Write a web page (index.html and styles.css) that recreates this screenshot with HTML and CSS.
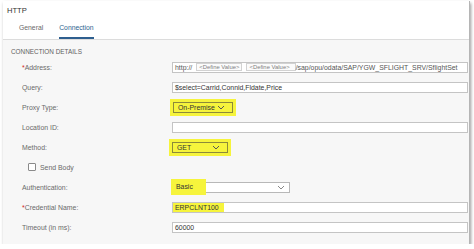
FILE: index.html
```html
<!DOCTYPE html>
<html lang="en">
<head>
<meta charset="utf-8">
<title>HTTP Connection</title>
<link rel="stylesheet" href="styles.css">
</head>
<body>
<div class="card">
  <header class="head">
    <div class="title">HTTP</div>
    <nav class="tabs">
      <span class="tab">General</span>
      <span class="tab active">Connection</span>
    </nav>
  </header>
  <section class="content">
    <h2 class="section-title">CONNECTION DETAILS</h2>
    <div class="form">
      <label class="label"><span class="req">*</span>Address:</label>
      <div class="field"><div class="input"><span class="plain">http://</span><span class="token">&lt;Define Value&gt;</span><span class="token">&lt;Define Value&gt;</span><span class="plain">/sap/opu/odata/SAP/YGW_SFLIGHT_SRV/SflightSet</span></div></div>

      <label class="label">Query:</label>
      <div class="field"><div class="input">$select=Carrid,Connid,Fldate,Price</div></div>

      <label class="label">Proxy Type:</label>
      <div class="field"><div class="select hl proxy"><span>On-Premise</span><svg class="chev" viewBox="0 0 8 5" width="8" height="5"><polyline points="1,1 4,4 7,1"/></svg></div></div>

      <label class="label">Location ID:</label>
      <div class="field"><div class="input"></div></div>

      <label class="label">Method:</label>
      <div class="field"><div class="select hl method"><span>GET</span><svg class="chev" viewBox="0 0 8 5" width="8" height="5"><polyline points="1,1 4,4 7,1"/></svg></div></div>

      <div class="check-row"><span class="checkbox"></span><span class="check-label">Send Body</span></div>

      <label class="label">Authentication:</label>
      <div class="field"><div class="select auth"><span class="mark auth-mark">Basic</span><svg class="chev" viewBox="0 0 8 5" width="8" height="5"><polyline points="1,1 4,4 7,1"/></svg></div></div>

      <label class="label"><span class="req">*</span>Credential Name:</label>
      <div class="field"><div class="input"><span class="mark cred-mark">ERPCLNT100</span></div></div>

      <label class="label">Timeout (in ms):</label>
      <div class="field"><div class="input">60000</div></div>
    </div>
  </section>
</div>
</body>
</html>
```

FILE: styles.css
```css
* { box-sizing: border-box; }
html, body { margin: 0; padding: 0; background: #ffffff; }
body {
  font-family: "Liberation Sans", Arial, sans-serif;
  color: #333333;
}
.card {
  margin: 1px 0 0 3px;
  width: 467px;
  height: 243px;
  background: #ffffff;
  box-shadow: 1px 2px 3px rgba(0, 0, 0, 0.4);
  border-right: 1px solid #b5b5b5;
  display: flex;
  flex-direction: column;
  overflow: hidden;
}
.head {
  padding-top: 3px;
  border-bottom: 1px solid #dcdcdc;
  background: #ffffff;
}
.title {
  padding-left: 4px;
  font-size: 7.6px;
  line-height: 13px;
  color: #333;
}
.tabs {
  display: flex;
  gap: 16px;
  padding-left: 16px;
  height: 22px;
}
.tab {
  font-size: 6.8px;
  line-height: 10px;
  padding-top: 6px;
  height: 22px;
  color: #6a6a6a;
  border-bottom: 2px solid transparent;
}
.tab.active {
  color: #2e5f8f;
  border-bottom-color: #2e5f8f;
}
.content {
  flex: 1;
  background: #f7f7f7;
  padding-top: 7px;
}
.section-title {
  margin: 0;
  padding-left: 8px;
  font-size: 6.4px;
  font-weight: normal;
  line-height: 10px;
  color: #5e5e5e;
}
.form {
  display: grid;
  grid-template-columns: 150px 1fr;
  grid-auto-rows: 20px;
  align-items: center;
  padding-left: 19px;
  padding-right: 1px;
}
.label {
  font-size: 6.9px;
  color: #6a6a6a;
  white-space: nowrap;
}
.req { color: #d0271d; }
.field { position: relative; }
.input {
  position: relative;
  height: 11px;
  background: #ffffff;
  border: 1px solid #c4c4c4;
  font-size: 6.9px;
  line-height: 9px;
  padding: 0 2px;
  color: #333;
  white-space: nowrap;
  display: flex;
  align-items: center;
  overflow: hidden;
}
.plain { color: #555; }
.token {
  border: 1px solid #d2d2d2;
  background: #fbfbfb;
  color: #808080;
  font-size: 5.9px;
  height: 8px;
  line-height: 6px;
  padding: 0 2px;
  margin-left: 4px;
}
.token + .token { padding-right: 5px; }
.select {
  position: relative;
  height: 11px;
  border: 1px solid #b8b8b8;
  background: #ffffff;
  font-size: 6.9px;
  line-height: 9px;
  padding: 0 4px 0 4px;
  display: flex;
  align-items: center;
  color: #333;
}
.select.hl {
  background: #f6f43c;
  border-color: #8c8a3a;
  box-shadow: 0 0 0 3px #f6f43c;
}
.proxy { width: 60px; margin-left: 1px; }
.method { width: 56px; }
.auth { width: 118px; }
.chev {
  margin-left: auto;
  fill: none;
  stroke: #888;
  stroke-width: 1;
}
.select.hl .chev { stroke: #555; margin-right: 3px; }
.mark {
  position: absolute;
  left: -2px;
  top: -4px;
  bottom: -3px;
  background: #f6f43c;
  display: flex;
  align-items: center;
  color: #333;
}
.auth-mark { width: 35px; padding-left: 5px; }
.cred-mark { width: 52px; padding-left: 3px; left: -1px; top: -2px; bottom: -3px; }
.input .cred-mark { position: absolute; }
.check-row {
  grid-column: 1 / -1;
  display: flex;
  align-items: center;
  gap: 4px;
  padding-left: 6px;
}
.checkbox {
  width: 8px;
  height: 8px;
  border: 1px solid #8a8a8a;
  background: #ffffff;
  border-radius: 1px;
}
.check-label {
  font-size: 6.9px;
  color: #6a6a6a;
}
```
